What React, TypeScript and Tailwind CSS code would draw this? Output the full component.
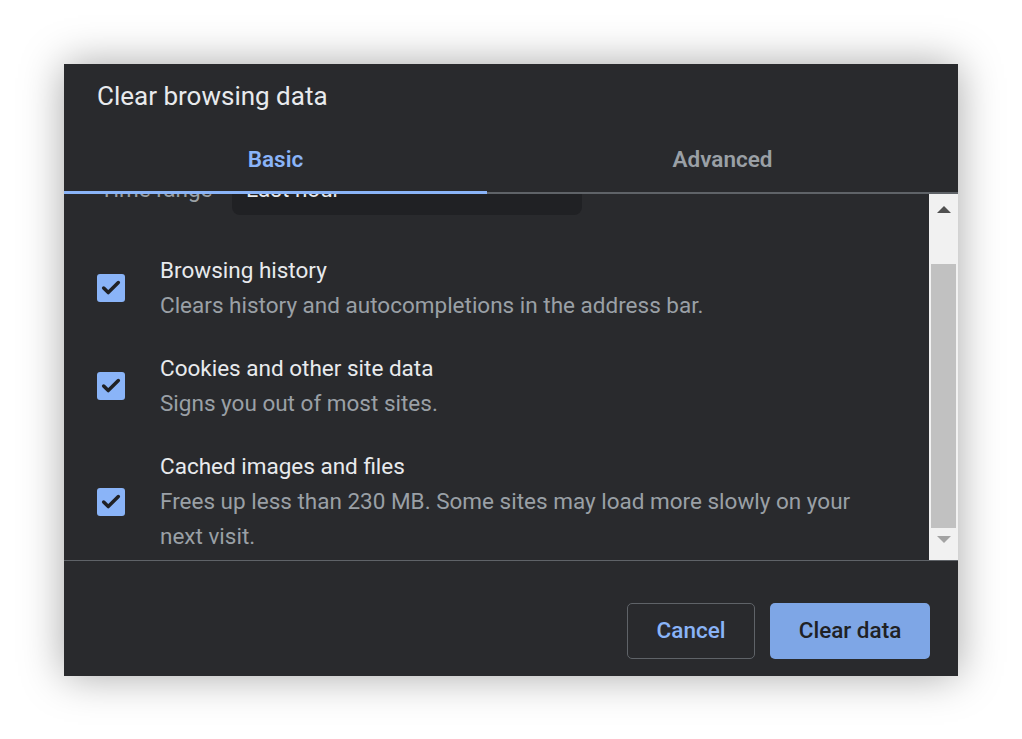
import { Check } from "lucide-react";

const items = [
  { title: "Browsing history", desc: "Clears history and autocompletions in the address bar." },
  { title: "Cookies and other site data", desc: "Signs you out of most sites." },
  {
    title: "Cached images and files",
    desc: "Frees up less than 230 MB. Some sites may load more slowly on your next visit.",
  },
];

function Checkbox() {
  return (
    <div className="w-[28px] h-[28px] rounded-[3px] bg-[#8ab4f8] flex items-center justify-center shrink-0">
      <Check size={22} strokeWidth={3.8} color="#202124" />
    </div>
  );
}

export default function App() {
  return (
    <div
      className="w-[1022px] h-[739px] bg-white pl-[64px] pt-[64px]"
      style={{ fontFamily: "Roboto, 'Liberation Sans', sans-serif" }}
    >
      <div className="w-[894px] h-[612px] bg-[#292a2d] flex flex-col shadow-[0_0_40px_rgba(0,0,0,0.35)]">
        <div className="h-[64px] flex items-center px-[33px] text-[26px] text-[#e8eaed]">
          Clear browsing data
        </div>

        <div className="flex border-b-2 border-[#5f6368]">
          <div className="w-[423px] h-[66px] flex items-center justify-center text-[22.5px] font-semibold text-[#8ab4f8] border-b-[3px] border-[#8ab4f8] -mb-[2px]">
            Basic
          </div>
          <div className="flex-1 h-[64px] flex items-center justify-center text-[22.5px] font-semibold text-[#9aa0a6]">
            Advanced
          </div>
        </div>

        <div className="h-[366px] flex overflow-hidden">
          <div className="flex-1 flex flex-col overflow-hidden">
            <div className="flex items-end gap-[20px] -mt-[37px] pl-[36px]">
              <span className="text-[22.5px] leading-[30px] text-[#9aa0a6] w-[112px] whitespace-nowrap pb-[11px]">
                Time range
              </span>
              <div className="w-[350px] h-[58px] rounded-[8px] bg-[#202124] flex items-end pb-[11px] px-[14px] text-[22.5px] leading-[30px] text-[#e8eaed]">
                Last hour
              </div>
            </div>
            <div className="flex flex-col gap-[28px] mt-[38px]">
              {items.map((it) => (
                <div key={it.title} className="flex items-center pl-[33px]">
                  <Checkbox />
                  <div className="ml-[35px] w-[720px] flex flex-col text-[22.5px] leading-[35px]">
                    <span className="text-[#e8eaed]">{it.title}</span>
                    <span className="text-[#9aa0a6]">{it.desc}</span>
                  </div>
                </div>
              ))}
            </div>
          </div>
          <div className="w-[29px] bg-[#f1f1f1] flex flex-col items-center py-[8px]">
            <svg width="14" height="8" viewBox="0 0 14 8" className="mt-[4px]">
              <polygon points="7,0 14,7 0,7" fill="#505050" />
            </svg>
            <div className="w-[25px] h-[264px] bg-[#c1c1c1] mt-[50px]" />
            <svg width="14" height="8" viewBox="0 0 14 8" className="mt-[8px]">
              <polygon points="0,0 14,0 7,7" fill="#a3a3a3" />
            </svg>
          </div>
        </div>

        <div className="flex-1 border-t border-[#5f6368] flex items-end justify-end gap-[15px] pr-[28px] pb-[17px]">
          <button className="w-[128px] h-[56px] rounded-[5px] border border-[#5f6368] text-[22.5px] font-medium text-[#8ab4f8]">
            Cancel
          </button>
          <button className="w-[160px] h-[56px] rounded-[5px] bg-[#7ea6e6] text-[22.5px] font-medium text-[#202124]">
            Clear data
          </button>
        </div>
      </div>
    </div>
  );
}
